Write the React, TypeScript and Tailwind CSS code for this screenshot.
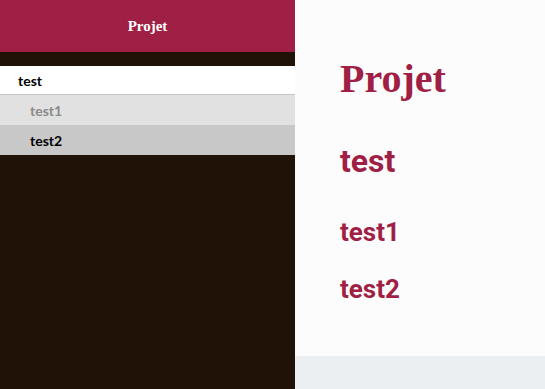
export default function App() {
  const slab = { fontFamily: '"Liberation Serif", "DejaVu Serif", serif' };
  return (
    <div className="flex h-[389px] w-[545px] overflow-hidden">
      {/* Sidebar */}
      <aside className="flex w-[295px] shrink-0 flex-col bg-[#211208] font-['Lato',sans-serif]">
        <div className="flex h-[52px] items-center justify-center bg-[#a01f45]">
          <span className="text-[15px] font-bold text-white" style={slab}>
            Projet
          </span>
        </div>
        <nav className="mt-[14px] flex flex-col text-[14px] font-bold">
          <a className="flex h-[29px] items-center border-b border-[#c4c4c4] bg-white pl-[18px] text-black">test</a>
          <a className="flex h-[30px] items-center bg-[#e1e1e1] pl-[30px] text-[#8a8a8a]">test1</a>
          <a className="flex h-[30px] items-center bg-[#c8c8c8] pl-[30px] text-black">test2</a>
        </nav>
      </aside>

      {/* Content */}
      <main className="flex flex-1 flex-col bg-[#fcfcfd]">
        <div className="flex flex-1 flex-col pl-[45px] pt-[57px] text-[#a01f45]">
          <h1 className="text-[40px] font-bold leading-[44px]" style={slab}>
            Projet
          </h1>
          <h2 className="mt-[41px] font-['Roboto',sans-serif] text-[32px] font-bold leading-[38px]">test</h2>
          <h3 className="mt-[36px] font-['Roboto',sans-serif] text-[26px] font-bold leading-[32px]">test1</h3>
          <h3 className="mt-[25px] font-['Roboto',sans-serif] text-[26px] font-bold leading-[32px]">test2</h3>
        </div>
        <div className="h-[33px] bg-[#eceff2]" />
      </main>
    </div>
  );
}
